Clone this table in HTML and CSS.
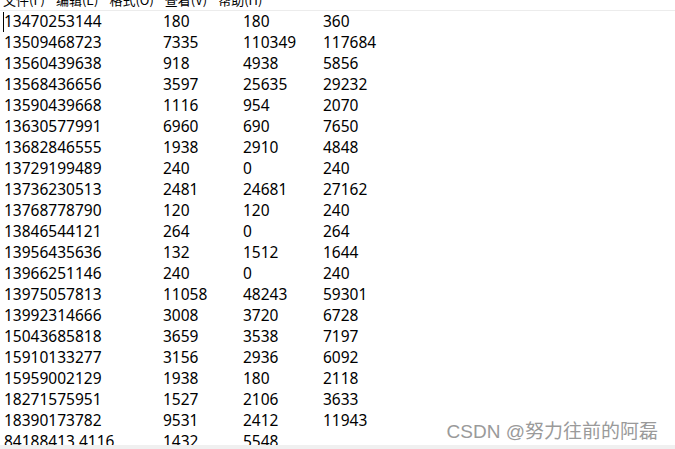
FILE: index.html
```html
<!DOCTYPE html>
<html lang="zh-CN">
<head>
<meta charset="utf-8">
<title>Notepad</title>
<link rel="stylesheet" href="styles.css">
</head>
<body>
<div class="window">
  <div class="menubar">
    <span class="menu-item">文件(F)</span>
    <span class="menu-item">编辑(E)</span>
    <span class="menu-item">格式(O)</span>
    <span class="menu-item">查看(V)</span>
    <span class="menu-item">帮助(H)</span>
  </div>
  <div class="editor">
    <span class="caret"></span>
    <div class="grid">
      <span>13470253144</span><span>180</span><span>180</span><span>360</span>
      <span>13509468723</span><span>7335</span><span>110349</span><span>117684</span>
      <span>13560439638</span><span>918</span><span>4938</span><span>5856</span>
      <span>13568436656</span><span>3597</span><span>25635</span><span>29232</span>
      <span>13590439668</span><span>1116</span><span>954</span><span>2070</span>
      <span>13630577991</span><span>6960</span><span>690</span><span>7650</span>
      <span>13682846555</span><span>1938</span><span>2910</span><span>4848</span>
      <span>13729199489</span><span>240</span><span>0</span><span>240</span>
      <span>13736230513</span><span>2481</span><span>24681</span><span>27162</span>
      <span>13768778790</span><span>120</span><span>120</span><span>240</span>
      <span>13846544121</span><span>264</span><span>0</span><span>264</span>
      <span>13956435636</span><span>132</span><span>1512</span><span>1644</span>
      <span>13966251146</span><span>240</span><span>0</span><span>240</span>
      <span>13975057813</span><span>11058</span><span>48243</span><span>59301</span>
      <span>13992314666</span><span>3008</span><span>3720</span><span>6728</span>
      <span>15043685818</span><span>3659</span><span>3538</span><span>7197</span>
      <span>15910133277</span><span>3156</span><span>2936</span><span>6092</span>
      <span>15959002129</span><span>1938</span><span>180</span><span>2118</span>
      <span>18271575951</span><span>1527</span><span>2106</span><span>3633</span>
      <span>18390173782</span><span>9531</span><span>2412</span><span>11943</span>
      <span>84188413 4116</span><span>1432</span><span>5548</span><span></span>
    </div>
    <div class="watermark">CSDN @努力往前的阿磊</div>
  </div>
  <div class="hscroll"></div>
</div>
</body>
</html>
```
FILE: styles.css
```css
* { box-sizing: border-box; }
html, body { margin: 0; padding: 0; background: #fff; }
.window {
  width: 675px;
  height: 449px;
  display: flex;
  flex-direction: column;
  overflow: hidden;
  background: #fff;
}
.menubar {
  height: 11px;
  flex: none;
  display: flex;
  align-items: flex-end;
  padding-left: 3px;
  overflow: hidden;
  border-bottom: 1px solid #ececec;
}
.menu-item {
  font-family: "Noto Sans CJK SC", sans-serif;
  font-size: 13px;
  line-height: 16px;
  height: 16px;
  flex: none;
  color: #000;
  margin-right: 11px;
  position: relative;
  top: -2px;
}
.editor {
  flex: 1;
  position: relative;
  overflow: hidden;
}
.grid {
  display: grid;
  grid-template-columns: 159px 80px 80px 1fr;
  padding-left: 4px;
  font-family: "Noto Sans", sans-serif;
  font-size: 15.5px;
  line-height: 21px;
  color: #000;
  white-space: pre;
}
.caret {
  position: absolute;
  left: 3px;
  top: 1px;
  width: 1px;
  height: 20px;
  background: #000;
}
.watermark {
  position: absolute;
  right: 17px;
  bottom: 2px;
  font-family: "Liberation Sans", "Noto Sans CJK SC", sans-serif;
  font-size: 19px;
  line-height: 22px;
  color: #9a9a9a;
  text-shadow: 0 0 1px #fff, 0 0 2px #fff;
}
.hscroll {
  height: 4px;
  flex: none;
  background: #f0f0f0;
}
```
